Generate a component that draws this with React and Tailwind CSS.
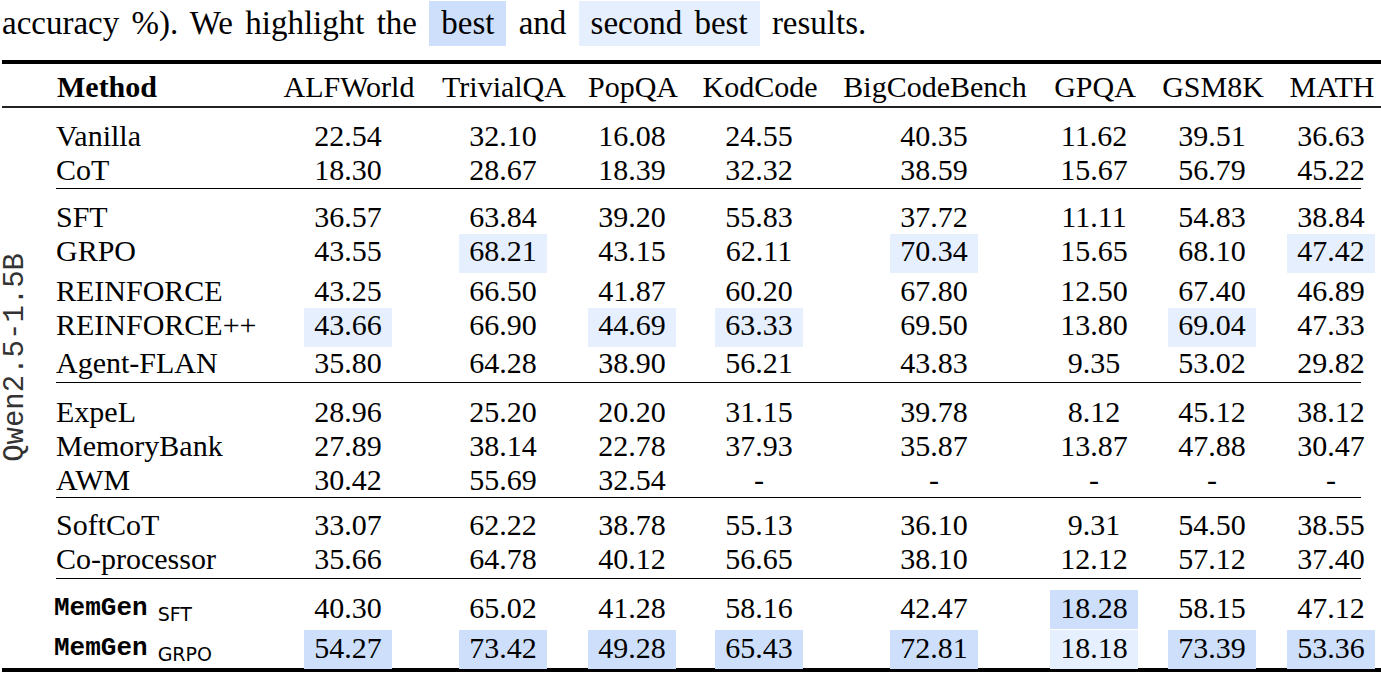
import React from "react";

const COLS =
  "grid grid-cols-[213px_158px_152px_106px_148px_202px_118px_118px_120px]";

const HEADERS = [
  "ALFWorld",
  "TrivialQA",
  "PopQA",
  "KodCode",
  "BigCodeBench",
  "GPQA",
  "GSM8K",
  "MATH",
];

// b = best, s = second best
const GROUPS = [
  {
    pad: "pt-[5px] pb-[7px]",
    rows: [
      { name: "Vanilla", vals: ["22.54", "32.10", "16.08", "24.55", "40.35", "11.62", "39.51", "36.63"] },
      { name: "CoT", vals: ["18.30", "28.67", "18.39", "32.32", "38.59", "15.67", "56.79", "45.22"] },
    ],
  },
  {
    pad: "pt-[5px] pb-[8px]",
    rows: [
      { name: "SFT", vals: ["36.57", "63.84", "39.20", "55.83", "37.72", "11.11", "54.83", "38.84"] },
      {
        name: "GRPO",
        h: "h-[40px]",
        vals: ["43.55", "68.21:s", "43.15", "62.11", "70.34:s", "15.65", "68.10", "47.42:s"],
      },
      { name: "REINFORCE", vals: ["43.25", "66.50", "41.87", "60.20", "67.80", "12.50", "67.40", "46.89"] },
      {
        name: "REINFORCE++",
        h: "h-[38px]",
        vals: ["43.66:s", "66.90", "44.69:s", "63.33:s", "69.50", "13.80", "69.04:s", "47.33"],
      },
      { name: "Agent-FLAN", vals: ["35.80", "64.28", "38.90", "56.21", "43.83", "9.35", "53.02", "29.82"] },
    ],
  },
  {
    pad: "pt-[6px] pb-[6px]",
    rows: [
      { name: "ExpeL", vals: ["28.96", "25.20", "20.20", "31.15", "39.78", "8.12", "45.12", "38.12"] },
      { name: "MemoryBank", vals: ["27.89", "38.14", "22.78", "37.93", "35.87", "13.87", "47.88", "30.47"] },
      { name: "AWM", vals: ["30.42", "55.69", "32.54", "-", "-", "-", "-", "-"] },
    ],
  },
  {
    pad: "pt-[4px] pb-[8px]",
    rows: [
      { name: "SoftCoT", vals: ["33.07", "62.22", "38.78", "55.13", "36.10", "9.31", "54.50", "38.55"] },
      { name: "Co-processor", vals: ["35.66", "64.78", "40.12", "56.65", "38.10", "12.12", "57.12", "37.40"] },
    ],
  },
  {
    pad: "pt-[9px] pb-0",
    rows: [
      {
        memgen: "SFT",
        h: "h-[40px]",
        vals: ["40.30", "65.02", "41.28", "58.16", "42.47", "18.28:b", "58.15", "47.12"],
      },
      {
        memgen: "GRPO",
        h: "h-[40px]",
        vals: ["54.27:b", "73.42:b", "49.28:b", "65.43:b", "72.81:b", "18.18:s", "73.39:b", "53.36:b"],
      },
    ],
  },
];

function Cell({ raw, memgen }) {
  const [v, mark] = raw.split(":");
  const bg =
    mark === "b" ? "bg-[#cddffb]" : mark === "s" ? "bg-[#e6effd]" : "";
  return (
    <div className="flex items-center justify-center">
      <span
        className={`inline-block px-[10px] h-[39px] ${
          memgen ? "leading-[36px]" : "leading-[33px]"
        } ${bg}`}
      >
        {v}
      </span>
    </div>
  );
}

function MethodName({ row }) {
  if (row.memgen) {
    return (
      <div className="flex items-center -ml-[2px] pb-[2px]">
        <span className="font-bold text-[26px] font-['Liberation_Mono',monospace]">
          MemGen
        </span>
        <span className="ml-[10px] mt-[12px] text-[19px] font-['DejaVu_Sans',sans-serif]">
          {row.memgen}
        </span>
      </div>
    );
  }
  return <div className="flex items-center pb-[6px]">{row.name}</div>;
}

export default function App() {
  return (
    <div className="w-[1381px] h-[676px] bg-white overflow-hidden text-black font-['Liberation_Serif',serif]">
      {/* Caption */}
      <div className="h-[60px] pt-[1px] pl-[2px] text-[33px] leading-[45px] whitespace-nowrap [word-spacing:4px]">
        accuracy %). We highlight the{" "}
        <span className="inline-block px-[12px] bg-[#cddffb]">best</span> and{" "}
        <span className="inline-block px-[12px] bg-[#e6effd]">second best</span>{" "}
        results.
      </div>

      <div className="ml-[2px] text-[30px]">
        <div className="h-[4px] bg-black" />

        {/* Header */}
        <div className="flex h-[42px] pb-[8px]">
          <div className="w-[55px] shrink-0" />
          <div className={COLS}>
            <div className="flex items-center font-bold">Method</div>
            {HEADERS.map((h) => (
              <div key={h} className="flex items-center justify-center">
                {h}
              </div>
            ))}
          </div>
        </div>
        <div className="h-[2px] bg-[#222]" />

        {/* Body */}
        <div className="flex">
          <div className="w-[55px] shrink-0 -ml-[1px] pt-[145px]">
            <div className="leading-[29px] w-[29px] [writing-mode:vertical-rl] rotate-180 text-[#333] font-['Liberation_Mono',monospace] text-[29px]">
              Qwen2.5-1.5B
            </div>
          </div>
          <div className="flex flex-col">
            {GROUPS.map((g, gi) => (
              <div key={gi}>
                {gi > 0 && <div className="h-[1px] w-[1305px] bg-black" />}
                <div className={g.pad}>
                  {g.rows.map((r, ri) => (
                    <div key={ri} className={`${COLS} ${r.h || "h-[34px]"}`}>
                      <MethodName row={r} />
                      {r.vals.map((v, vi) => (
                        <Cell key={vi} raw={v} memgen={!!r.memgen} />
                      ))}
                    </div>
                  ))}
                </div>
              </div>
            ))}
          </div>
        </div>
        <div className="h-[4px] bg-black" />
      </div>
    </div>
  );
}
